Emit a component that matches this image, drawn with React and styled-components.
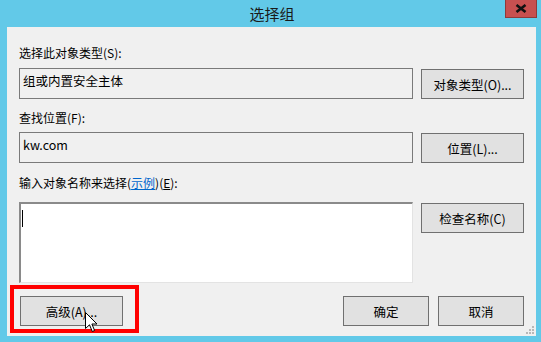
import React from "react";
import styled, { createGlobalStyle } from "styled-components";

const GlobalStyle = createGlobalStyle`
  html, body {
    margin: 0;
    padding: 0;
    background: #62c9e8;
  }
  * {
    box-sizing: border-box;
  }
`;

const Window = styled.div`
  width: 541px;
  height: 342px;
  background-color: #62c9e8;
  padding: 0 5px 6px 7px;
  display: flex;
  flex-direction: column;
  font-family: "Noto Sans CJK SC", "Microsoft YaHei", sans-serif;
  font-size: 12px;
  color: #000;
  overflow: hidden;
`;

const TitleBar = styled.div`
  height: 27px;
  display: grid;
  grid-template-columns: 1fr auto 1fr;
  align-items: start;
  margin-right: -1px;
`;

const Title = styled.div`
  grid-column: 2;
  font-size: 15px;
  line-height: 27px;
  color: #1a1a1a;
`;

const CloseButton = styled.div`
  grid-column: 3;
  justify-self: end;
  width: 32px;
  height: 18px;
  background-color: #c75050;
  border: 1px solid #8f3a3a;
  border-top: none;
  display: flex;
  align-items: center;
  justify-content: center;
`;

const Content = styled.div`
  flex: 1;
  background-color: #f0f0f0;
  padding: 18px 12px 0 12px;
  display: flex;
  flex-direction: column;
  position: relative;
`;

const Label = styled.div`
  height: 16px;
  line-height: 16px;
  margin-top: ${(p) => p.$gap || 0}px;
  margin-bottom: ${(p) => p.$below || 7}px;
  white-space: nowrap;
`;

const Mnemonic = styled.span`
  text-decoration: underline;
`;

const Link = styled.span`
  color: #0066cc;
  text-decoration: underline;
`;

const Row = styled.div`
  display: grid;
  grid-template-columns: 394px 103px;
  column-gap: 8px;
  align-items: start;
`;

const ReadOnlyBox = styled.div`
  height: 31px;
  border: 1px solid #7a7a7a;
  background-color: #f0f0f0;
  padding: 4px 3px 0 3px;
  line-height: 16px;
  font-size: 12.5px;
`;

const NameInput = styled.div`
  height: 81px;
  background-color: #fff;
  border-top: 2px solid #8a8a8a;
  border-left: 2px solid #8a8a8a;
  border-right: 1px solid #e3e3e3;
  border-bottom: 1px solid #e3e3e3;
  padding: 6px 0 0 1px;
`;

const Caret = styled.div`
  width: 1px;
  height: 17px;
  background-color: #000;
`;

const Button = styled.div`
  width: ${(p) => p.$width || 103}px;
  height: 30px;
  margin-top: ${(p) => (p.$nudge ? 1 : 0)}px;
  background-color: #e1e1e1;
  border: 1px solid #707070;
  display: flex;
  align-items: center;
  justify-content: center;
  white-space: nowrap;
  font-size: 12.5px;
  position: relative;
`;

const Footer = styled.div`
  display: flex;
  align-items: center;
  margin-top: 13px;
  padding-left: 1px;
`;

const FooterRight = styled.div`
  margin-left: auto;
  display: flex;
  gap: 9px;
`;

const Highlight = styled.span`
  position: absolute;
  left: -11px;
  top: -12px;
  right: -17px;
  bottom: -8px;
  border: 4px solid #ff0000;
  pointer-events: none;
`;

const Cursor = styled.svg`
  position: absolute;
  left: 64px;
  top: 15px;
`;

const Grip = styled.svg`
  position: absolute;
  right: 1px;
  bottom: 1px;
`;

const App = () => {
  return (
    <>
      <GlobalStyle />
      <Window>
        <TitleBar>
          <Title>选择组</Title>
          <CloseButton>
            <svg width="12" height="9" viewBox="0 0 12 9">
              <path d="M1.5 1 L10.5 8 M10.5 1 L1.5 8" stroke="#111" strokeWidth="2.6" />
            </svg>
          </CloseButton>
        </TitleBar>
        <Content>
          <Label>选择此对象类型(S):</Label>
          <Row>
            <ReadOnlyBox>组或内置安全主体</ReadOnlyBox>
            <Button $nudge>对象类型(O)...</Button>
          </Row>

          <Label $gap={11} $below={6}>查找位置(F):</Label>
          <Row>
            <ReadOnlyBox>kw.com</ReadOnlyBox>
            <Button $nudge>位置(L)...</Button>
          </Row>

          <Label $gap={12} $below={11}>
            输入对象名称来选择(<Link>示例</Link>)(<Mnemonic>E</Mnemonic>):
          </Label>
          <Row>
            <NameInput>
              <Caret />
            </NameInput>
            <Button $nudge>检查名称(C)</Button>
          </Row>

          <Footer>
            <Button>
              高级(A)...
              <Highlight />
              <Cursor width="13" height="21" viewBox="0 0 13 21">
                <path
                  d="M0.5 0.5 L0.5 16.5 L4.5 12.8 L7.3 19.5 L9.6 18.5 L6.9 12 L12 12 Z"
                  fill="#fff"
                  stroke="#000"
                  strokeWidth="1"
                  strokeLinejoin="miter"
                />
              </Cursor>
            </Button>
            <FooterRight>
              <Button $width={86}>确定</Button>
              <Button $width={86}>取消</Button>
            </FooterRight>
          </Footer>

          <Grip width="10" height="10" viewBox="0 0 10 10">
            <g fill="#b8b8b8">
              <rect x="7" y="1" width="2" height="2" />
              <rect x="4" y="4" width="2" height="2" />
              <rect x="7" y="4" width="2" height="2" />
              <rect x="1" y="7" width="2" height="2" />
              <rect x="4" y="7" width="2" height="2" />
              <rect x="7" y="7" width="2" height="2" />
            </g>
          </Grip>
        </Content>
      </Window>
    </>
  );
};

export default App;
